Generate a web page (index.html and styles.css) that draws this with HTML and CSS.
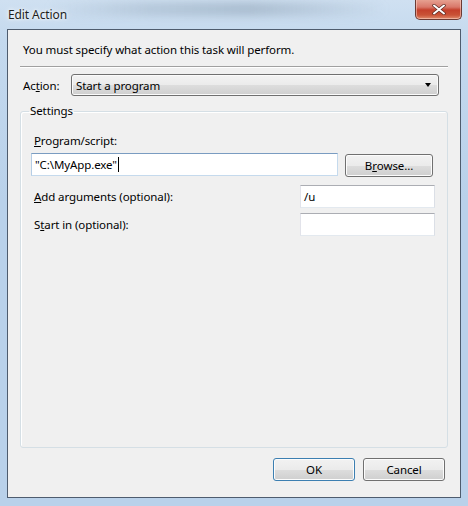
FILE: index.html
```html
<!DOCTYPE html>
<html>
<head>
<meta charset="utf-8">
<link rel="stylesheet" href="styles.css">
</head>
<body>
<div class="window">
  <div class="titlebar">
    <div class="blur"></div>
    <span class="title">Edit Action</span>
    <div class="close">
      <svg width="14" height="11" viewBox="0 0 14 11"><path d="M2 1.5 L12 9.5 M12 1.5 L2 9.5" stroke="#5a2a22" stroke-width="3.4" stroke-linecap="round"/><path d="M2 1.5 L12 9.5 M12 1.5 L2 9.5" stroke="#ffffff" stroke-width="2" stroke-linecap="round"/></svg>
    </div>
  </div>
  <div class="client">
    <p class="intro">You must specify what action this task will perform.</p>
    <div class="sep"></div>
    <div class="action-row">
      <span class="label">Ac<u>t</u>ion:</span>
      <div class="combo">
        <span>Start a program</span>
        <span class="arrow"></span>
      </div>
    </div>
    <fieldset class="group">
      <legend>Settings</legend>
      <div class="label prog-label"><u>P</u>rogram/script:</div>
      <div class="prog-row">
        <div class="textbox prog">"C:\MyApp.exe"<span class="caret"></span></div>
        <div class="button browse">B<u>r</u>owse...</div>
      </div>
      <div class="arg-row">
        <span class="label"><u>A</u>dd arguments (optional):</span>
        <div class="textbox small">/u</div>
      </div>
      <div class="arg-row start">
        <span class="label">S<u>t</u>art in (optional):</span>
        <div class="textbox small"></div>
      </div>
    </fieldset>
    <div class="buttons">
      <div class="button ok">OK</div>
      <div class="button">Cancel</div>
    </div>
  </div>
</div>
</body>
</html>
```
FILE: styles.css
```css
* { box-sizing: border-box; }
html, body { margin: 0; padding: 0; }
body {
  width: 468px;
  height: 506px;
  overflow: hidden;
  background: #bcd3ea;
  font-family: "Noto Sans", "Open Sans", sans-serif;
  font-size: 11.5px;
  letter-spacing: -0.1px;
  color: #000;
}
.window {
  width: 468px;
  height: 506px;
  padding: 0 7px 8px 7px;
  display: flex;
  flex-direction: column;
  background: linear-gradient(to bottom, #cfe0f1 0px, #c4d9ee 40px, #b9d1ea 200px, #b9d1ea 506px);
}
.titlebar {
  position: relative;
  height: 29px;
  flex: none;
  display: flex;
  align-items: flex-start;
  justify-content: space-between;
}
.blur {
  position: absolute;
  left: 40px;
  top: 2px;
  width: 340px;
  height: 14px;
  border-radius: 8px;
  background: linear-gradient(to right, rgba(150,170,190,0.0), rgba(140,160,180,0.35) 30%, rgba(120,140,160,0.4) 60%, rgba(150,170,190,0.0));
  filter: blur(4px);
}
.title {
  position: relative;
  margin-top: 6px;
  margin-left: 1px;
  font-size: 12px;
  color: #1e1e1e;
  text-shadow: 0 0 6px #ffffff, 0 0 3px #ffffff;
}
.close {
  position: relative;
  width: 47px;
  height: 21px;
  margin-top: -1px;
  margin-right: -1px;
  border: 1px solid #6b3a33;
  border-top: none;
  border-radius: 0 0 5px 5px;
  background: linear-gradient(to bottom, #e8a696 0%, #d9786a 40%, #c4402b 55%, #c95236 80%, #e08c6c 100%);
  box-shadow: inset 0 0 0 1px rgba(255,220,210,0.5);
  display: flex;
  align-items: center;
  justify-content: center;
}
.client {
  flex: 1;
  border: 1px solid #4e5c6e;
  background: #f0f0f0;
  padding: 0 12px 0 12px;
  display: flex;
  flex-direction: column;
}
.intro {
  margin: 12px 0 0 3px;
  line-height: 16px;
}
.sep {
  margin: 8px 0 0 0;
  height: 2px;
  border-top: 1px solid #a0a0a0;
  border-bottom: 1px solid #ffffff;
}
.action-row {
  margin-top: 6px;
  display: flex;
  align-items: center;
  height: 22px;
}
.action-row .label {
  margin-left: 3px;
  width: 48px;
}
.combo {
  width: 368px;
  height: 22px;
  border: 1px solid #707070;
  border-radius: 3px;
  background: linear-gradient(to bottom, #f3f3f3 0%, #ebebeb 50%, #dddddd 51%, #cfcfcf 100%);
  box-shadow: inset 0 0 0 1px #fbfbfb;
  display: flex;
  align-items: center;
  justify-content: space-between;
  padding: 0 7px 0 4px;
}
.arrow {
  width: 0;
  height: 0;
  border-left: 3.5px solid transparent;
  border-right: 3.5px solid transparent;
  border-top: 4px solid #000;
}
.group {
  margin: 7px 0 0 0;
  padding: 0 12px 0 10px;
  height: 345px;
  border: 1px solid #d5dfe5;
  border-radius: 3px;
  box-shadow: inset 1px 1px 0 #ffffff;
  min-width: 0;
}
.group legend {
  padding: 0 1px;
  margin-left: -2px;
  line-height: 16px;
}
.prog-label {
  margin-top: 14px;
  margin-left: 3px;
  line-height: 16px;
}
.prog-row {
  margin-top: 3px;
  display: flex;
  align-items: center;
}
.textbox {
  height: 23px;
  background: #fff;
  border: 1px solid #abadb3;
  border-left-color: #e2e3ea;
  border-right-color: #dbdfe6;
  border-bottom-color: #e3e9ef;
  padding: 3px 0 0 3px;
  line-height: 16px;
  white-space: nowrap;
}
.prog {
  width: 307px;
  border-color: #7a9cc1 #c5daed #c5daed #b5cde5;
}
.caret {
  display: inline-block;
  width: 1px;
  height: 15px;
  background: #000;
  vertical-align: -3px;
  margin-left: 1px;
}
.button {
  height: 23px;
  border: 1px solid #707070;
  border-radius: 3px;
  background: linear-gradient(to bottom, #f2f2f2 0%, #ebebeb 50%, #dddddd 51%, #cfcfcf 100%);
  box-shadow: inset 0 0 0 1px #fcfcfc;
  display: flex;
  align-items: center;
  justify-content: center;
  line-height: 16px;
}
.browse {
  width: 88px;
  margin-left: 7px;
  margin-top: 2px;
}
.arg-row {
  margin-top: 8px;
  display: flex;
  align-items: center;
  justify-content: space-between;
}
.arg-row.start { margin-top: 5px; }
.arg-row .label { margin-left: 3px; }
.textbox.small {
  width: 135px;
}
.buttons {
  margin-top: 10px;
  display: flex;
  justify-content: flex-end;
  gap: 8px;
  padding-right: 3px;
}
.buttons .button {
  width: 82px;
}
.buttons .ok {
  border-color: #3c7fb1;
}
```
